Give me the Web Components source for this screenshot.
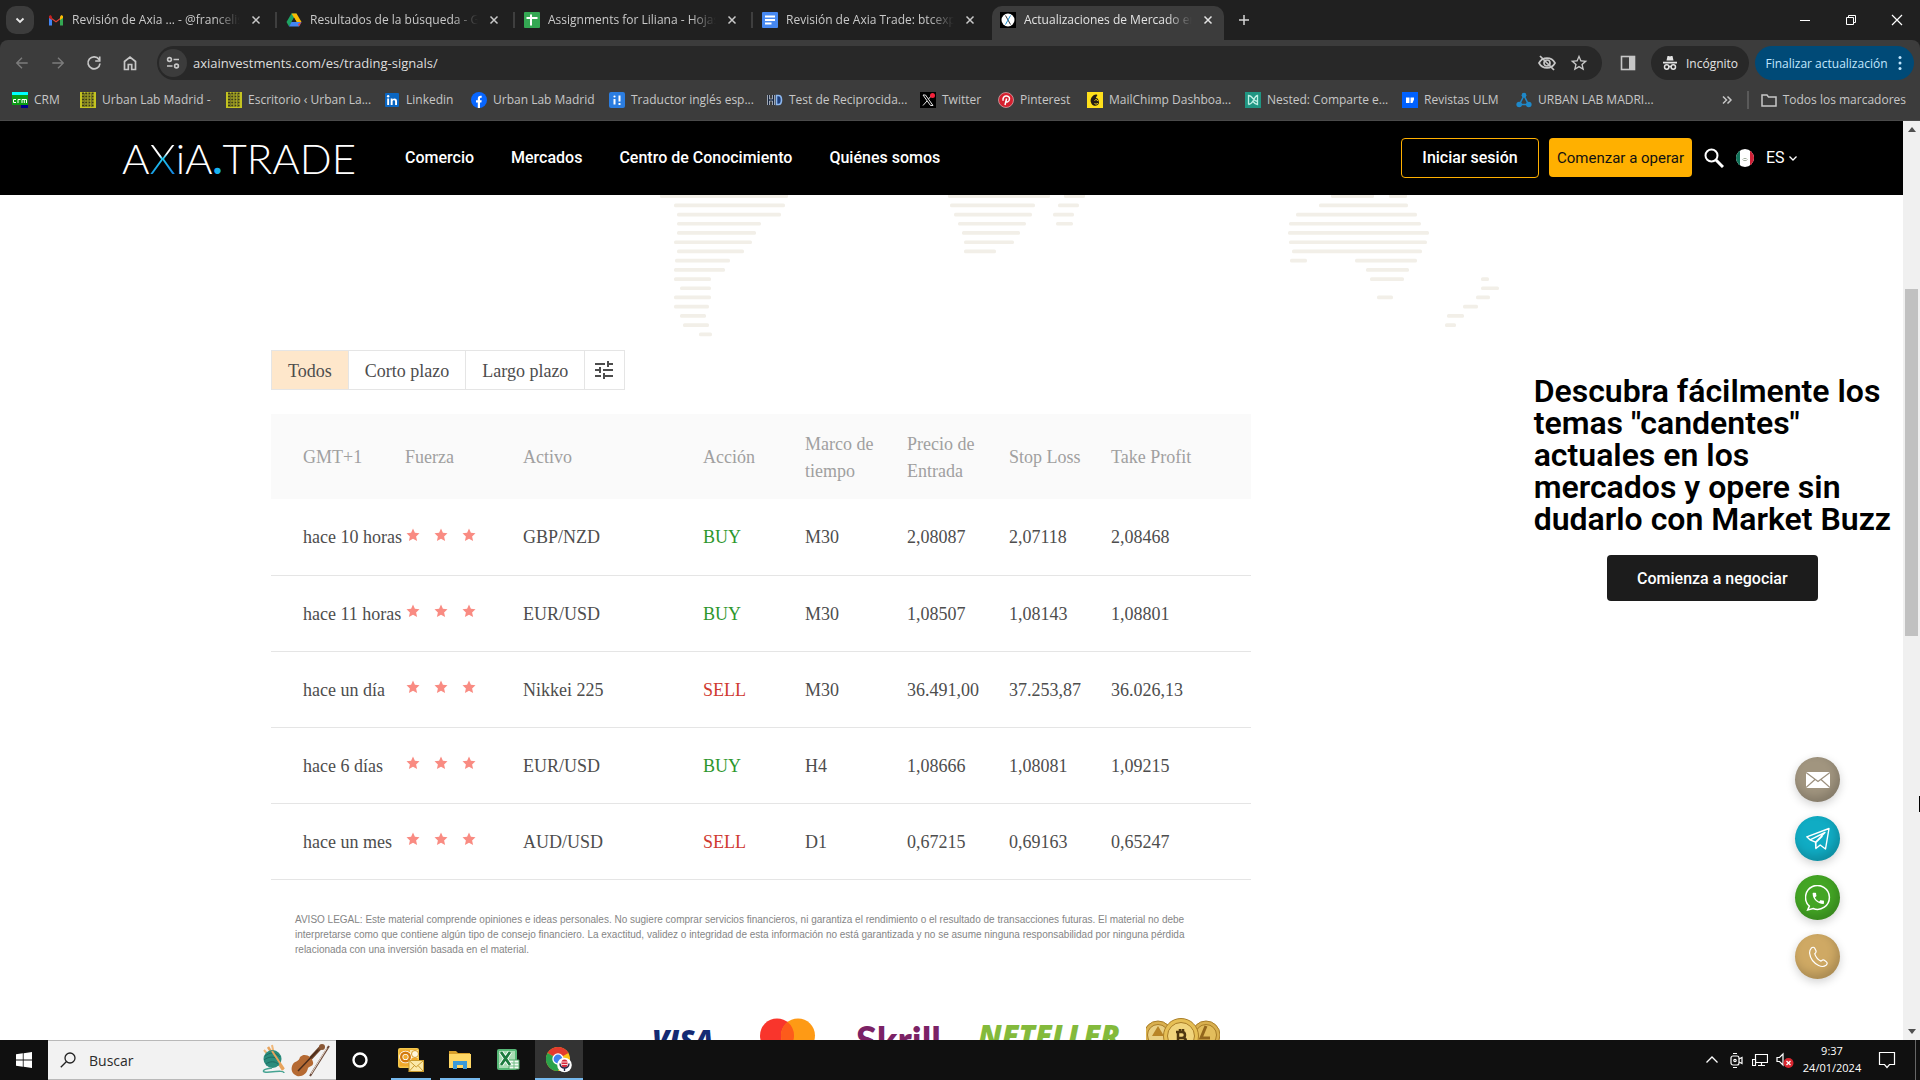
<!DOCTYPE html>
<html lang="es">
<head>
<meta charset="utf-8">
<title>Actualizaciones de Mercado en Axia</title>
<style>
  html, body { height: 100%; }
  body { margin: 0; overflow: hidden; background: #fff; font-family: "Open Sans", "Noto Sans", sans-serif; }
</style>
</head>
<body>
<desktop-screen></desktop-screen>
<script>
const RESET = `
  *, *::before, *::after { box-sizing: border-box; }
  button, input, select { font: inherit; color: inherit; background: none; border: 0; margin: 0; padding: 0; outline: 0; }
  a { color: inherit; text-decoration: none; }
  svg { display: block; flex: none; }
`;
function define(name, css, html, ready) {
  const tpl = document.createElement('template');
  tpl.innerHTML = `<style>${RESET}${css}</style>${html}`;
  customElements.define(name, class extends HTMLElement {
    constructor() {
      super();
      this.attachShadow({ mode: 'open' }).appendChild(tpl.content.cloneNode(true));
    }
    connectedCallback() {
      if (ready && !this.done) { this.done = true; ready(this, this.shadowRoot); }
    }
  });
}
const PHONE = 'M6.62 10.79c1.44 2.83 3.76 5.14 6.59 6.59l2.2-2.2c.27-.27.67-.36 1.02-.24 1.12.37 2.33.57 3.57.57.55 0 1 .45 1 1V20c0 .55-.45 1-1 1-9.39 0-17-7.61-17-17 0-.55.45-1 1-1h3.5c.55 0 1 .45 1 1 0 1.25.2 2.45.57 3.57.11.35.03.74-.25 1.02z';
const GRID = `<rect width="16" height="16" fill="#c3c321"/><path d="M2 1.500h12M2 4.500h12M2 7.500h12M2 10.500h12M2 13.500h12" stroke="#3b3b18" stroke-width="2" stroke-dasharray="2 1.200"/><path d="M4.500 1v14M8 1v14M11.500 1v14" stroke="#77772a"/>`;
/* Each entry: [view box size, drawing]. */
const ICONS = {
  gmail: [16, '<path d="M1 4v9h3V7.500L8 10.500l4-3V13h3V4L8 9z" fill="#e94235"/><path d="M1 4.500V13.500h3V7z" fill="#4285f4"/><path d="M15 4.500V13.500h-3V7z" fill="#34a853"/><path d="M12 4.500l1.500-1.500L15 4v2l-3 2z" fill="#fbbc04"/><path d="M1 4l1.500-1L4 4.500V8L1 6z" fill="#c5221f"/>'],
  drive: [16, '<path d="M5.500 1.500h5l-5 9-2.500 4L.5 10z" fill="#1ea362"/><path d="M5.500 1.500h5l5 8.500h-5z" fill="#fbbc04"/><path d="M3 14.500L5.500 10h10L13 14.500z" fill="#4285f4"/><path d="M5.500 10L8 5.500l2.500 4.500z" fill="#202020"/><path d="M12 12l3.500-2L13 14.500z" fill="#ea4335"/>'],
  sheets: [16, '<rect width="16" height="16" rx="1" fill="#34a853"/><path d="M7 2.500v11M2.500 6h11" stroke="#fff" stroke-width="2"/>'],
  docs: [16, '<rect width="16" height="16" rx="1" fill="#4688f1"/><path d="M3 4.500h10M3 8h10M3 11.500h6.500" stroke="#fff" stroke-width="2"/>'],
  axia: [16, '<rect width="16" height="16" fill="#000"/><circle cx="8" cy="8" r="6.500" fill="#fff"/><path d="M5.500 3.500l5 9" stroke="#333" stroke-width="1"/><path d="M10.500 3.500l-5 9" stroke="#1b93d6" stroke-width="1"/>'],
  close: [10, '<path d="M1.500 1.500l7 7M8.500 1.500l-7 7" stroke="currentColor" stroke-width="1.500"/>'],
  down: [12, '<path d="M2.500 4.500L6 8l3.500-3.500" fill="none" stroke="#e8e8e8" stroke-width="1.800"/>'],
  plus: [12, '<path d="M6 1v10M1 6h10" stroke="#d5d5d5" stroke-width="1.500"/>'],
  back: [16, '<path d="M14.500 8H2.500M8 2L2 8l6 6" fill="none" stroke="currentColor" stroke-width="1.600"/>'],
  forward: [16, '<path d="M1.500 8h12M8 2l6 6-6 6" fill="none" stroke="currentColor" stroke-width="1.600"/>'],
  reload: [16, '<path d="M13 4.500A6 6 0 1 0 14 8.500M13.700 1.500V6H9.200" fill="none" stroke="currentColor" stroke-width="1.700"/>'],
  home: [16, '<path d="M2.500 6.500L8 2l5.500 4.500V14.500H9.700V9.500H6.300v5H2.500z" fill="none" stroke="currentColor" stroke-width="1.700"/>'],
  site: [16, '<g fill="none" stroke="currentColor" stroke-width="1.600"><circle cx="4.500" cy="4.500" r="1.900"/><path d="M8.500 4.500H14M2 11h5.500"/><circle cx="11.500" cy="11" r="1.900"/></g>'],
  eye: [20, '<g fill="none" stroke="currentColor" stroke-width="1.700"><path d="M2 10c3.500-6.500 12.500-6.500 16 0-3.500 6.500-12.500 6.500-16 0z"/><circle cx="10" cy="10" r="3"/><path d="M3 3l14 14"/></g>'],
  star: [24, '<path fill="currentColor" d="M22 9.240l-7.190-.62L12 2 9.190 8.630 2 9.240l5.460 4.730L5.820 21 12 17.270 18.180 21l-1.630-7.030zM12 15.400l-3.760 2.270 1-4.280-3.320-2.880 4.380-.38L12 6.100l1.710 4.040 4.380.38-3.320 2.880 1 4.280z"/>'],
  panel: [16, '<rect x="1.500" y="1.500" width="13" height="13" fill="none" stroke="#c7c7c7" stroke-width="1.600"/><path d="M9 2h5.500v12H9z" fill="#c7c7c7"/>'],
  incognito: [16, '<g fill="currentColor"><path d="M4.500 5.500L5.500 1h1.300L8 1.600 9.200 1h1.300l1 4.500zM1 6.800h14v1.700H1z"/></g><g fill="none" stroke="currentColor" stroke-width="1.500"><circle cx="4.700" cy="12" r="2.200"/><circle cx="11.300" cy="12" r="2.200"/><path d="M7 11.600h2"/></g>'],
  dots: [16, '<g fill="currentColor"><circle cx="8" cy="2.500" r="1.500"/><circle cx="8" cy="8" r="1.500"/><circle cx="8" cy="13.500" r="1.500"/></g>'],
  min: [12, '<path d="M1 6.500h10" stroke="#fff"/>'],
  restore: [12, '<path d="M1.500 3.500h7v7h-7zM3.500 3.500v-2h7v7h-2" fill="none" stroke="#fff"/>'],
  exit: [12, '<path d="M1 1l10 10M11 1L1 11" stroke="#fff" stroke-width="1.200"/>'],
  crm: [16, '<rect width="16" height="5" fill="#0ff"/><rect y="3" width="16" height="10" fill="#0a9a14"/><path d="M4 7.500H1.500v3H4M6 11V7.500h2.500M10 11V7.500h4.500V11M12.300 7.500V11" stroke="#fff" fill="none"/><rect x="9" y="13" width="7" height="3" fill="#00008c"/><rect y="13" width="9" height="3" fill="#3c3c3c"/>'],
  grid: [16, GRID],
  linkedin: [16, '<rect x="1" y="1" width="14" height="14" rx="1" fill="#0a66c2"/><path d="M3.200 6.500h1.900V13H3.200zM6.700 6.500h1.800v.9c1-1.500 4.500-1.500 4.500 1.600v4h-1.900V9.500c0-1.800-2.500-1.700-2.500 0V13H6.700z" fill="#fff"/><circle cx="4.150" cy="4.300" r="1.200" fill="#fff"/>'],
  facebook: [16, '<circle cx="8" cy="8" r="8" fill="#0866ff"/><path d="M6.800 16v-5.500H5V8.200h1.800V7c0-2.500 1.200-3.600 3.900-3.200v2c-1.300-.1-1.700.2-1.700 1.200v1.200h1.700l-.3 2.300H9V16z" fill="#fff"/>'],
  translate: [16, '<rect width="16" height="16" rx="2" fill="#2b7de0"/><path d="M5.500 7v5.500M10.500 3.500v6M10.500 11v2" stroke="#fff" stroke-width="2"/><circle cx="5.500" cy="4.500" r="1.100" fill="#fff"/>'],
  hd: [16, '<path d="M1.500 3v10M6.500 3v10M1.500 8h5" stroke="#dfe9f7" stroke-width="2.500"/><path d="M1.500 3v10M6.500 3v10M1.500 8h5" stroke="#14233c" stroke-width="1.300"/><path d="M9.500 3.500h2c4 0 4 9 0 9h-2z" fill="#1d3f7d" stroke="#8db7ee" stroke-width="1.600"/>'],
  x: [16, '<rect width="16" height="16" fill="#000"/><path d="M3 3h2.500L13 13.500h-2.500zM12 3L8.500 7M7 9l-4 4.500" stroke="#e6e6e6" fill="none"/><circle cx="12.500" cy="3.500" r="2.500" fill="#f4213b"/>'],
  pinterest: [16, '<circle cx="8" cy="8" r="7.500" fill="#d5202f" stroke="#f0c9cc" stroke-width=".6"/><path d="M7 13l1.600-6.500M5.200 8.700C3.500 3.200 12 2.500 11.500 7c-.4 3.500-3.200 3.500-3.600 2" fill="none" stroke="#fff" stroke-width="1.500"/>'],
  mailchimp: [16, '<rect width="16" height="16" fill="#ffe01b"/><path d="M4 10.500C2.500 7 6 2 9.500 2.500c2 .5-.5 2-.5 3.500 2 0 2.500 1.500 3 4.500.3 2-3 4-5.500 3-1.500-.6-2-1.600-2.500-3z" fill="#241c15"/><path d="M7.500 8.500c1.500-1.500 3-1 3 .5M7.500 11.500c1.500 1 3 .5 3.500-.5" stroke="#ffe01b" fill="none"/>'],
  nested: [16, '<rect width="16" height="16" fill="#209683"/><path d="M3.500 12.500V3.500c2 0 3 1 4.500 3s2.500 3 4.500 3M3.500 12.500c2 0 3-1 4.500-3.500s2.500-5.500 4.500-5.500v9c-2 0-3-1-4.500-3" fill="none" stroke="#bff0e5" stroke-width="1.300"/>'],
  revistas: [16, '<rect width="16" height="16" fill="#0061fe"/><path d="M4 5.500h3.500v5.500H4zM8.500 5.500H12v2L10.500 11h-2z" fill="#fff"/>'],
  urban: [16, '<path d="M8 3.500L3.500 12.500h9z" fill="none" stroke="#1e88c9" stroke-width="1.500"/><g fill="#1e88c9"><circle cx="8" cy="3.200" r="2.400"/><circle cx="3.200" cy="12.500" r="2.800"/><circle cx="12.800" cy="12.500" r="2.800"/></g>'],
  folder: [16, '<path d="M1 3h5l1.500 2H15v9H1z" fill="none" stroke="currentColor" stroke-width="1.500"/>'],
  more: [12, '<path d="M2 2.500L5.500 6 2 9.500M6.500 2.500L10 6 6.500 9.500" fill="none" stroke="currentColor" stroke-width="1.500"/>'],
  search: [20, '<circle cx="7.500" cy="7.500" r="6" fill="none" stroke="#fff" stroke-width="2"/><path d="M12 12l7 7" stroke="#fff" stroke-width="3"/>'],
  flag: [18, '<clipPath id="f"><circle cx="9" cy="9" r="9"/></clipPath><g clip-path="url(#f)"><rect width="18" height="18" fill="#fff"/><rect width="4" height="18" fill="#11735a"/><rect x="14" width="4" height="18" fill="#cf2036"/><path d="M6.500 10.500c1 1.500 4 1.500 5 0M7.500 9.500h3" fill="none" stroke="#8d9a86" stroke-width=".8"/></g>'],
  chevron: [10, '<path d="M1.500 3.500L5 7l3.500-3.500" fill="none" stroke="#fff" stroke-width="1.300"/>'],
  tune: [24, '<path fill="currentColor" d="M3 17v2h6v-2H3zM3 5v2h10V5H3zm10 16v-2h8v-2h-8v-2h-2v6h2zM7 9v2H3v2h4v2h2V9H7zm14 4v-2H11v2h10zm-6-4h2V7h4V5h-4V3h-2v6z"/>'],
  rate: [14, '<path d="M7 .5l1.900 4.300 4.600.5-3.400 3.100 1 4.600L7 10.700 2.900 13l1-4.600L.5 5.300l4.600-.5z" fill="#f98b82"/>'],
  mail: [24, '<path d="M0 4h24v16H0z" fill="#fff"/><path d="M0 4.500l12 9 12-9M0 19.500L9 11.500M24 19.500l-9-8" fill="none" stroke="#9c907e" stroke-width="1.300"/>'],
  plane: [24, '<path d="M.8 9.800L23 1.500 19.500 22l-5.300-4-4.300 3.500-.4-6.300L4 12.800zM4 12.800L19 5.500 9.500 15.200M9.900 21.500V15.500L16.500 9" fill="none" stroke="#fff" stroke-width="1.400" stroke-linejoin="round"/>'],
  whatsapp: [24, `<path d="M4 20.500L2.500 24l5-1.300A11 11 0 1 0 4 20.500z" transform="translate(0 -1)" fill="none" stroke="#fff" stroke-width="1.400"/><path d="${PHONE}" fill="#fff" transform="translate(5.300 5.300) scale(.58)"/>`],
  phone: [24, '<path d="M4.500 2.500C6 1 7.500 1 8.300 2.200l1.500 3c.5 1.200 0 2-1.300 3.300 1 3.500 3.200 6.200 6.800 8 1.500-1.300 2.700-1.700 3.700-1l2.200 1.800c1.300 1.200.8 2.500-.5 3.700-2 1.600-4.800 1.800-8 .2C7.500 18.500 3.500 13 2.900 8c-.2-2.300.2-4 1.600-5.500z" fill="none" stroke="#fff" stroke-width="1.300"/>'],
  windows: [16, '<path d="M0 2.200L6.800 1.300V7.600H0zM7.600 1.200L16 0v7.600H7.600zM0 8.400h6.800v6.300L0 13.800zM7.600 8.400H16V16l-8.400-1.200z" fill="#fff"/>'],
  lens: [16, '<circle cx="10" cy="6" r="5" fill="none" stroke="#222" stroke-width="1.300"/><path d="M6.500 9.500L.8 15.200" stroke="#222" stroke-width="1.300"/>'],
  ring: [16, '<circle cx="8" cy="8" r="6.500" fill="none" stroke="#fff" stroke-width="2.400"/>'],
  outlook: [26, '<rect x="0" y="1" width="21" height="20" rx="2" fill="#f5c84c"/><rect x="1.500" y="2.500" width="18" height="17" rx="1" fill="#f0a92c"/><path d="M12 3h8v8h-8z" fill="#fbe8ae"/><circle cx="7.500" cy="10" r="4.300" fill="none" stroke="#fff" stroke-width="4"/><circle cx="7.500" cy="10" r="4.300" fill="none" stroke="#d2780b" stroke-width="2.400"/><circle cx="17" cy="7" r="3.500" fill="#fdf6dd" stroke="#d49b2c"/><rect x="11" y="13.500" width="14.500" height="11" fill="#fbe9a9" stroke="#c99b2e"/><path d="M11 13.500l7.200 6.500 7.300-6.500M11 24.500l5.500-6M25.500 24.500l-5.500-6" fill="none" stroke="#c99b2e"/>'],
  explorer: [24, '<path d="M1 3h7l2 2h12v3H1z" fill="#d9a02b"/><path d="M1 6h22v14H1z" fill="#ffd765"/><path d="M5 13h14v8h-4v-4H9v4H5z" fill="#3a9ad9"/>'],
  excel: [24, '<rect x="1" y="1" width="20" height="21" rx="2" fill="#57b877"/><rect x="3" y="3" width="16" height="17" fill="#a9dcb3"/><path d="M13 12h10v9H13z" fill="#f3fbf4" stroke="#4ea765"/><path d="M13 15h10M13 18h10M18 12v9" stroke="#6fbd82"/><path d="M5 4l9 13M14 4L5 17" stroke="#fff" stroke-width="4.500"/><path d="M5 4l9 13M14 4L5 17" stroke="#1c7a3d" stroke-width="2.800"/>'],
  chrome: [26, '<circle cx="12" cy="12" r="12" fill="#fbc116"/><path d="M12 12L1.600 6A12 12 0 0 1 22.400 6z" fill="#e33b2e"/><path d="M12 12L1.600 6A12 12 0 0 0 12 24l5-8z" fill="#2ba24c"/><circle cx="12" cy="12" r="5.700" fill="#fff"/><circle cx="12" cy="12" r="4.400" fill="#3f82ee"/><circle cx="18.500" cy="18" r="7.300" fill="#fff"/><rect x="15.500" y="12.500" width="6" height="8" rx="3" fill="#d8283c"/><path d="M15.500 15h6M15.500 17.500h6" stroke="#fff" stroke-width=".8"/><path d="M14 16.500c0 6 9 6 9 0M18.500 21v3" fill="none" stroke="#252346" stroke-width="1.400"/>'],
  up: [16, '<path d="M2.500 10.500L8 5l5.500 5.500" fill="none" stroke="#fff" stroke-width="1.300"/>'],
  meet: [16, '<g fill="none" stroke="#fff" stroke-width="1.200"><rect x="3" y="4" width="8" height="9" rx="2"/><path d="M11 7l3-1.500v6L11 10M5 1.500h4M5 15.500h4"/><circle cx="7" cy="8.500" r="1.200"/></g>'],
  monitor: [16, '<g fill="none" stroke="#fff" stroke-width="1.200"><path d="M3.500 2.500h12v8h-12zM9.500 10.500v3M6 13.500h7"/><path d="M.5 7.500h3v6h-3z" fill="#101010"/></g>'],
  speaker: [18, '<path d="M1 6.500h2.500L7 3v11L3.500 10.500H1z" fill="none" stroke="#fff" stroke-width="1.200"/><circle cx="12.500" cy="12" r="5" fill="#d8262f"/><path d="M10.500 10l4 4M14.500 10l-4 4" stroke="#fff" stroke-width="1.300"/>'],
  note: [18, '<path d="M1.500 1.500h15v12h-5L9 16.500l-2.500-3h-5z" fill="none" stroke="#fff" stroke-width="1.200"/>'],
  coins: [74, '<g stroke="#a97d27"><circle cx="12" cy="17" r="14" fill="#d9b04f"/><circle cx="60" cy="17" r="14" fill="#d9b04f"/><circle cx="12" cy="17" r="10.500" fill="#e9cf83"/><circle cx="60" cy="17" r="10.500" fill="#e3bd5c"/><circle cx="35" cy="18" r="17.500" fill="#e6bf55"/><circle cx="35" cy="18" r="13.500" fill="#f0d47c"/></g><path d="M12 8l6 10H6z" fill="#b88427"/><path d="M60 8l-5 12h9" fill="none" stroke="#93661c" stroke-width="3"/><path d="M32 13v16M30 14h6c4 0 4 6 0 6h-4 5c4 0 4 7 0 7h-7M34 11v3M37 11v3" fill="none" stroke="#4e370f" stroke-width="2.500"/>']
};
define('ui-icon', ':host { display: inline-flex; flex: none; }', '', (el, root) => {
  const [box, art] = ICONS[el.getAttribute('name')];
  const size = el.getAttribute('size') || 16;
  root.innerHTML += `<svg width="${size}" height="${size}" viewBox="0 0 ${box} ${box}" aria-hidden="true">${art}</svg>`;
});
/* Fills the .icon holder with the icon that the host's attribute names. */
function hostIcon(el, root) {
  root.querySelector('.icon').innerHTML = `<ui-icon name="${el.getAttribute('icon')}"></ui-icon>`;
}

/* ---------- browser window ---------- */
define('browser-tab', `
  :host { display: flex; align-items: center; box-sizing: border-box; width: 238px; height: 34px; padding: 0 1px 6px 8px; color: #c9c9c9; }
  .icon { display: flex; margin-right: 8px; }
  .title { flex: 1; overflow: hidden; white-space: nowrap; font-size: 12px; line-height: 16px; margin-right: 6px;
    -webkit-mask-image: linear-gradient(90deg, #000 85%, transparent); mask-image: linear-gradient(90deg, #000 85%, transparent); }
  button { display: flex; width: 20px; height: 20px; align-items: center; justify-content: center; }
  i { width: 2px; height: 16px; background: #3f3f3f; margin-left: 9px; }
  :host([active]) { background: #3c3c3c; color: #e3e3e3; border-radius: 10px 10px 0 0; width: 232px; padding-right: 6px; }
  :host([last]) i { visibility: hidden; }
  :host([active]) i { display: none; }
`, `<span class="icon"></span><span class="title"><slot></slot></span><button aria-label="Cerrar pestaña"><ui-icon name="close" size="10"></ui-icon></button><i></i>`, hostIcon);

define('tab-strip', `
  :host { display: flex; align-items: flex-end; height: 40px; background: #202020; padding-left: 6px; }
  .menu { width: 28px; height: 28px; margin: 0 6px 6px 0; border-radius: 10px; background: #3c3c3c; display: flex; align-items: center; justify-content: center; }
  .new { display: flex; width: 40px; height: 34px; padding-bottom: 6px; align-items: center; justify-content: center; }
  .win { margin-left: auto; display: flex; height: 40px; }
  .win button { width: 46px; display: flex; align-items: center; justify-content: center; }
`, `<button class="menu" aria-label="Buscar pestañas"><ui-icon name="down" size="12"></ui-icon></button>
  <browser-tab icon="gmail">Revisión de Axia ... - @francelisgarcia</browser-tab>
  <browser-tab icon="drive">Resultados de la búsqueda - Google Drive</browser-tab>
  <browser-tab icon="sheets">Assignments for Liliana - Hojas de cálculo</browser-tab>
  <browser-tab icon="docs" last>Revisión de Axia Trade: btcexpander</browser-tab>
  <browser-tab icon="axia" active>Actualizaciones de Mercado en Axia</browser-tab>
  <button class="new" aria-label="Nueva pestaña"><ui-icon name="plus" size="12"></ui-icon></button>
  <div class="win"><button aria-label="Minimizar"><ui-icon name="min" size="12"></ui-icon></button><button aria-label="Restaurar"><ui-icon name="restore" size="12"></ui-icon></button><button aria-label="Cerrar"><ui-icon name="exit" size="12"></ui-icon></button></div>`);

define('address-bar', `
  :host { display: flex; align-items: center; height: 46px; padding: 0 6px 0 4px; background: #3c3c3c; color: #c7c7c7; font-size: 12px; border-radius: 8px 8px 0 0; }
  .nav { width: 36px; height: 34px; display: flex; align-items: center; justify-content: center; }
  .off { color: #7c7c7c; }
  .box { flex: 1; height: 34px; margin-left: 9px; border-radius: 17px; background: #282828; display: flex; align-items: center; padding: 0 13px 0 2px; gap: 12px; }
  .site { width: 28px; height: 28px; border-radius: 14px; background: #3c3c3c; display: flex; align-items: center; justify-content: center; margin-right: -6px; }
  input { flex: 1; font-size: 13px; color: #dedede; height: 28px; }
  .panel { width: 49px; display: flex; justify-content: center; padding-left: 3px; }
  .pill { height: 34px; border-radius: 17px; background: #282828; display: flex; align-items: center; color: #e3e3e3; white-space: nowrap; justify-content: center; gap: 8px; width: 98px; }
  .update { background: #004a77; color: #c2e7ff; width: 159px; margin-left: 6px; gap: 4px; padding-left: 4px; }
`, `<button class="nav off" aria-label="Atrás"><ui-icon name="back" size="14"></ui-icon></button><button class="nav off" aria-label="Adelante"><ui-icon name="forward" size="14"></ui-icon></button><button class="nav" aria-label="Volver a cargar"><ui-icon name="reload"></ui-icon></button><button class="nav" aria-label="Inicio"><ui-icon name="home"></ui-icon></button>
  <div class="box"><span class="site"><ui-icon name="site"></ui-icon></span><input aria-label="Dirección" value="axiainvestments.com/es/trading-signals/"><ui-icon name="eye" size="20"></ui-icon><ui-icon name="star" size="20"></ui-icon></div>
  <button class="panel" aria-label="Panel lateral"><ui-icon name="panel"></ui-icon></button>
  <button class="pill"><ui-icon name="incognito"></ui-icon>Incógnito</button>
  <button class="pill update">Finalizar actualización<ui-icon name="dots"></ui-icon></button>`);

define('bookmark-link', `
  :host { display: block; }
  a { display: flex; align-items: center; gap: 6px; white-space: nowrap; }
  .icon { display: flex; }
`, `<a href="#"><span class="icon"></span><slot></slot></a>`, hostIcon);
define('bookmarks-bar', `
  :host { display: flex; align-items: center; box-sizing: border-box; height: 35px; padding: 0 14px 6px 12px; border-bottom: 1px solid #4a4a4a; background: #3c3c3c; color: #c7c7c7; font-size: 12px; line-height: 16px; }
  nav { display: grid; grid-template-columns: 68px 146px 158px 87px 138px 158px 153px 78px 89px 158px 157px 114px 134px; flex: 1; }
  .sep { width: 2px; height: 18px; background: #5a5a5a; margin: 0 12px 0 14px; }
`, `<nav>
  <bookmark-link icon="crm">CRM</bookmark-link><bookmark-link icon="grid">Urban Lab Madrid -</bookmark-link><bookmark-link icon="grid">Escritorio ‹ Urban La...</bookmark-link><bookmark-link icon="linkedin">Linkedin</bookmark-link><bookmark-link icon="facebook">Urban Lab Madrid</bookmark-link><bookmark-link icon="translate">Traductor inglés esp...</bookmark-link><bookmark-link icon="hd">Test de Reciprocida...</bookmark-link><bookmark-link icon="x">Twitter</bookmark-link><bookmark-link icon="pinterest">Pinterest</bookmark-link><bookmark-link icon="mailchimp">MailChimp Dashboa...</bookmark-link><bookmark-link icon="nested">Nested: Comparte e...</bookmark-link><bookmark-link icon="revistas">Revistas ULM</bookmark-link><bookmark-link icon="urban">URBAN LAB MADRI...</bookmark-link></nav>
  <ui-icon name="more" size="12"></ui-icon><span class="sep"></span><bookmark-link icon="folder">Todos los marcadores</bookmark-link>`);

/* ---------- site ---------- */
define('site-header', `
  :host { display: flex; align-items: center; box-sizing: border-box; height: 74px; background: #000; color: #fff; padding: 0 105px 1px 122px; font-family: Roboto, sans-serif; font-size: 16px; font-weight: 500; }
  .logo { font: 300 42px/42px Lato, sans-serif; white-space: nowrap; width: 283px; }
  .x { background: linear-gradient(160deg, #fff 45%, #21c8f2 50%, #0b62d6); -webkit-background-clip: text; background-clip: text; color: transparent; }
  .dot { color: #18b4f0; font-weight: 700; }
  nav { display: flex; gap: 37px; margin-right: auto; white-space: nowrap; }
  .login { height: 40px; width: 138px; border: 1px solid #ffb000; border-radius: 4px; margin-right: 10px; }
  .start { height: 39px; width: 143px; background: #ffb000; color: #111; border-radius: 4px; margin-right: 12px; font-weight: 400; font-size: 15px; white-space: nowrap; }
  .flag { margin: 0 12px; }
  select { appearance: none; font-weight: 400; width: 22px; }
`, `<a class="logo" href="#">A<span class="x">X</span>iA<span class="dot">.</span>TRADE</a>
  <nav><a href="#">Comercio</a><a href="#">Mercados</a><a href="#">Centro de Conocimiento</a><a href="#">Quiénes somos</a></nav>
  <button class="login">Iniciar sesión</button><button class="start">Comenzar a operar</button><ui-icon name="search" size="20"></ui-icon><ui-icon class="flag" name="flag" size="18"></ui-icon><select aria-label="Idioma"><option>ES</option></select><ui-icon name="chevron" size="10"></ui-icon>`);

/* Start and end of every stripe, one list for each line of the map. */
const MAP_ROWS = [
  [20,148, 308,410, 424,445, 691,734, 749,767], [34,145, 310,395, 418,439, 679,768], [37,141, 314,392, 413,434, 656,777],
  [37,121, 318,386, 416,433, 649,781], [37,116, 322,380, 648,789], [34,112, 324,374, 649,787], [37,104, 324,356, 652,782],
  [35,90, 650,667, 715,777], [34,85, 726,769], [34,71, 730,764, 841,849], [40,71, 841,859], [34,71, 737,753, 836,850],
  [34,69, 823,838], [40,66, 807,824], [43,69, 805,816], [59,72]
];
define('world-map', ':host { display: block; height: 155px; padding-left: 640px; box-sizing: border-box; }',
  '<svg width="880" height="155" viewBox="0 0 880 155" aria-hidden="true"></svg>', (el, root) => {
  let out = '';
  MAP_ROWS.forEach((row, i) => {
    for (let k = 0; k < row.length; k += 2)
      out += `<rect x="${row[k]}" y="${(-.7 + i * 9.21).toFixed(1)}" width="${row[k + 1] - row[k]}" height="3.700" rx="1.500" fill="#f2efe8"/>`;
  });
  root.querySelector('svg').innerHTML = out;
});

define('term-filter', `
  :host { display: flex; height: 40px; font-size: 18px; color: #4d4d4d; }
  button { border: 1px solid #e5e5e5; border-left-width: 0; padding: 2px 16px 0; white-space: nowrap; height: 40px; display: flex; align-items: center; }
  .on { background: #fee7cb; border-left-width: 1px; }
  .tune { padding: 0 8px 0 7px; }
`, `<button class="on">Todos</button><button>Corto plazo</button><button>Largo plazo</button><button class="tune" aria-label="Filtros"><ui-icon name="tune" size="24"></ui-icon></button>`);

const SIGNALS = [
  ['hace 10 horas', 'GBP/NZD', 'BUY', 'M30', '2,08087', '2,07118', '2,08468'],
  ['hace 11 horas', 'EUR/USD', 'BUY', 'M30', '1,08507', '1,08143', '1,08801'],
  ['hace un día', 'Nikkei 225', 'SELL', 'M30', '36.491,00', '37.253,87', '36.026,13'],
  ['hace 6 días', 'EUR/USD', 'BUY', 'H4', '1,08666', '1,08081', '1,09215'],
  ['hace un mes', 'AUD/USD', 'SELL', 'D1', '0,67215', '0,69163', '0,65247']
];
define('signals-table', `
  :host { display: block; }
  table { width: 100%; table-layout: fixed; border-collapse: collapse; font-size: 18px; line-height: 27px; color: #4d4d4d; }
  th, td { padding: 2px 0 0; text-align: left; font-weight: 400; white-space: nowrap; }
  th { height: 85px; background: #fafafa; color: #a0a0a0; }
  td { height: 76px; border-bottom: 1px solid #e5e5e5; }
  th:first-child, td:first-child { padding-left: 32px; }
  .stars { display: flex; gap: 14px; padding: 0 0 6px 1px; }
  .BUY { color: #2c962c; } .SELL { color: #cf3a30; }
`, `<table><colgroup><col style="width:134px"><col style="width:118px"><col style="width:180px"><col style="width:102px"><col style="width:102px"><col style="width:102px"><col style="width:102px"><col></colgroup>
  <thead><tr><th>GMT+1</th><th>Fuerza</th><th>Activo</th><th>Acción</th><th>Marco de<br>tiempo</th><th>Precio de<br>Entrada</th><th>Stop Loss</th><th>Take Profit</th></tr></thead><tbody></tbody></table>`, (el, root) => {
  const star = '<ui-icon name="rate" size="14"></ui-icon>';
  root.querySelector('tbody').innerHTML = SIGNALS.map(([when, asset, side, ...rest]) =>
    `<tr><td>${when}</td><td><div class="stars">${star.repeat(3)}</div></td><td>${asset}</td><td class="${side}">${side}</td>${rest.map(v => `<td>${v}</td>`).join('')}</tr>`).join('');
});

define('market-promo', `
  :host { display: flex; flex-direction: column; align-items: center; gap: 20px; font-family: Roboto, sans-serif; }
  h2 { margin: 0; font-size: 32px; line-height: 32px; font-weight: 600; color: #000; white-space: nowrap; }
  button { width: 211px; height: 46px; border-radius: 4px; background: #1c1c1c; color: #fff; font-size: 16px; font-weight: 500; }
`, `<h2>Descubra fácilmente los<br>temas "candentes"<br>actuales en los<br>mercados y opere sin<br>dudarlo con Market Buzz</h2><button>Comienza a negociar</button>`);

define('payment-logos', `
  :host { display: flex; align-items: flex-start; box-sizing: border-box; padding-left: 652px; height: 60px; white-space: nowrap; }
  .visa { font: italic 800 28px/28px "Open Sans", sans-serif; color: #142a73; width: 108px; padding-top: 7px; }
  .cards { width: 96px; }
  .skrill { font: 900 38px/38px Lato, sans-serif; color: #7b2265; width: 122px; padding-top: 2px; }
  .neteller { font: italic 800 30px/30px "Open Sans", sans-serif; color: #83ba3b; width: 168px; padding-top: 3px; }
  span, svg { flex: none; }
`, `<span class="visa">VISA</span><svg class="cards" width="96" height="36" viewBox="0 0 96 36"><circle cx="17" cy="17.500" r="17" fill="#f9352c"/><circle cx="38" cy="17.500" r="17" fill="#fe9a15"/><path d="M27.500 4.100a17 17 0 0 1 0 26.800a17 17 0 0 1 0-26.800z" fill="#fd5b1b"/></svg><span class="skrill">Skrill</span><span class="neteller">NETELLER</span><ui-icon name="coins" size="74"></ui-icon>`);

define('contact-buttons', `
  :host { position: absolute; right: 63px; top: 636px; display: flex; flex-direction: column; gap: 14px; }
  button { width: 45px; height: 45px; border-radius: 50%; display: flex; align-items: center; justify-content: center; box-shadow: 0 3px 10px rgba(0,0,0,.18), inset -3px -5px 10px rgba(0,0,0,.18); }
  .m { background: #a1957f; } .t { background: #10acc4; } .w { background: #43a524; } .p { background: #cfa964; }
`, `<button class="m" aria-label="Correo"><ui-icon name="mail" size="24"></ui-icon></button><button class="t" aria-label="Telegram"><ui-icon name="plane" size="24"></ui-icon></button><button class="w" aria-label="WhatsApp"><ui-icon name="whatsapp" size="26"></ui-icon></button><button class="p" aria-label="Teléfono"><ui-icon name="phone" size="22"></ui-icon></button>`);

define('site-page', `
  :host { display: block; flex: 1; min-width: 0; overflow: hidden; background: #fff; font-family: "Liberation Serif", serif; position: relative; }
  main { display: flex; justify-content: space-between; align-items: flex-start; padding: 0 12px 0 271px; }
  .signals { width: 980px; }
  signals-table { margin-top: 24px; }
  .legal { margin: 32px 24px 0; font: 10px/15px "Liberation Sans", sans-serif; color: #858585; white-space: nowrap; }
  market-promo { margin-top: 25px; }
  payment-logos { margin-top: 61px; }
`, `<site-header></site-header><world-map></world-map>
  <main><section class="signals"><term-filter></term-filter><signals-table></signals-table>
  <p class="legal">AVISO LEGAL: Este material comprende opiniones e ideas personales. No sugiere comprar servicios financieros, ni garantiza el rendimiento o el resultado de transacciones futuras. El material no debe<br>interpretarse como que contiene algún tipo de consejo financiero. La exactitud, validez o integridad de esta información no está garantizada y no se asume ninguna responsabilidad por ninguna pérdida<br>relacionada con una inversión basada en el material.</p></section>
  <market-promo></market-promo></main><payment-logos></payment-logos><contact-buttons></contact-buttons>`);

define('page-scrollbar', `
  :host { display: flex; flex-direction: column; align-items: center; width: 17px; background: #f0f0f0; }
  .track { flex: 1; align-self: stretch; padding: 151px 2px 0; }
  .thumb { height: 347px; background: #c1c1c1; }
  .end { height: 17px; display: flex; align-items: center; }
`, `<span class="end"><svg width="8" height="5"><path d="M0 5l4-5 4 5z" fill="#505050"/></svg></span><div class="track"><div class="thumb"></div></div><span class="end"><svg width="8" height="5"><path d="M0 0l4 5 4-5z" fill="#505050"/></svg></span>`);

/* ---------- taskbar ---------- */
define('task-bar', `
  :host { display: flex; height: 40px; background: #101010; color: #fff; }
  button { display: flex; align-items: center; justify-content: center; height: 40px; }
  .start { width: 48px; }
  .search { width: 288px; background: #f2f2f2; border: solid #b9b9b9; border-width: 1px 0; display: flex; align-items: center; padding: 0 6px 0 12px; gap: 13px; color: #2b2b2b; font-size: 14px; }
  input { width: 160px; height: 30px; color: #2b2b2b; }
  input::placeholder { color: #2b2b2b; opacity: 1; }
  .apps { display: flex; gap: 9px; }
  .ring { width: 46px; padding-left: 2px; }
  .app { width: 37px; }
  .run { width: 40px; border-bottom: 2px solid #76b9ed; padding-top: 2px; }
  .now { width: 48px; background: #333; border-bottom: 2px solid #76b9ed; padding-top: 2px; }
  .tray { margin-left: auto; display: flex; align-items: center; gap: 8px; }
  .clock { font-size: 11px; line-height: 17px; text-align: center; width: 60px; height: 36px; white-space: nowrap; }
  .note { padding: 0 19px 0 8px; }
  .end { width: 5px; height: 40px; border-left: 1px solid #666; margin-left: -8px; }
`, `<button class="start" aria-label="Inicio"><ui-icon name="windows"></ui-icon></button>
  <label class="search"><ui-icon name="lens"></ui-icon><input placeholder="Buscar" aria-label="Buscar">
  <svg width="70" height="38" viewBox="0 0 70 38"><path d="M6 6l15 23" stroke="#e8a35b" stroke-width="2.500"/><path d="M2 9l5 6M10 4l3 14" stroke="#f0b778" stroke-width="2"/><circle cx="10.500" cy="18" r="9" fill="#2b8c7c"/><path d="M3 15c5-4 10-4 15 1M2 19c5-4 11-4 16 1M4 23c4-3 9-3 12 0" stroke="#1d6d62" fill="none"/><path d="M10 10l12 18" stroke="#e8a35b" stroke-width="2"/><path d="M10 27c-10 1-12 5-2 4s14-1 14 1" fill="none" stroke="#45a392" stroke-width="1.500"/><path d="M47 19L60 5" stroke="#6d4328" stroke-width="3.500"/><circle cx="60" cy="6" r="3" fill="#8a5836"/><path d="M38 16c5-5 12 0 13 5 1 4-3 4-5 6-1 6-6 9-11 8-5-2-7-7-4-12 2-3 6-2 7-7z" fill="#b56a33"/><path d="M36 30L56 9" stroke="#4a2c1b" stroke-width="1.500"/><path d="M67 5L48 35" stroke="#6b4a3b" stroke-width="2"/><path d="M65 7L49 33" stroke="#e5d5c6"/></svg></label>
  <div class="apps"><button class="ring" aria-label="Cortana"><ui-icon name="ring" size="16"></ui-icon></button>
  <button class="run" aria-label="Outlook"><ui-icon name="outlook" size="26"></ui-icon></button>
  <button class="run" aria-label="Explorador"><ui-icon name="explorer" size="24"></ui-icon></button>
  <button class="app" aria-label="Excel"><ui-icon name="excel" size="24"></ui-icon></button>
  <button class="now" aria-label="Chrome"><ui-icon name="chrome" size="26"></ui-icon></button></div>
  <div class="tray"><ui-icon name="up"></ui-icon><ui-icon name="meet"></ui-icon><ui-icon name="monitor"></ui-icon><ui-icon name="speaker" size="18"></ui-icon><time class="clock">9:37<br>24/01/2024</time><ui-icon class="note" name="note" size="18"></ui-icon><span class="end"></span></div>`);

define('desktop-screen', `
  :host { display: flex; flex-direction: column; height: 100vh; overflow: hidden; background: #202020; }
  .view { flex: 1; min-height: 0; display: flex; }
  .pointer { position: absolute; right: 0; top: 796px; width: 1px; height: 16px; background: #000; }
`, `<tab-strip></tab-strip><address-bar></address-bar><bookmarks-bar></bookmarks-bar>
  <div class="view"><site-page></site-page><page-scrollbar></page-scrollbar></div><task-bar></task-bar><span class="pointer"></span>`);
</script>
</body>
</html>
